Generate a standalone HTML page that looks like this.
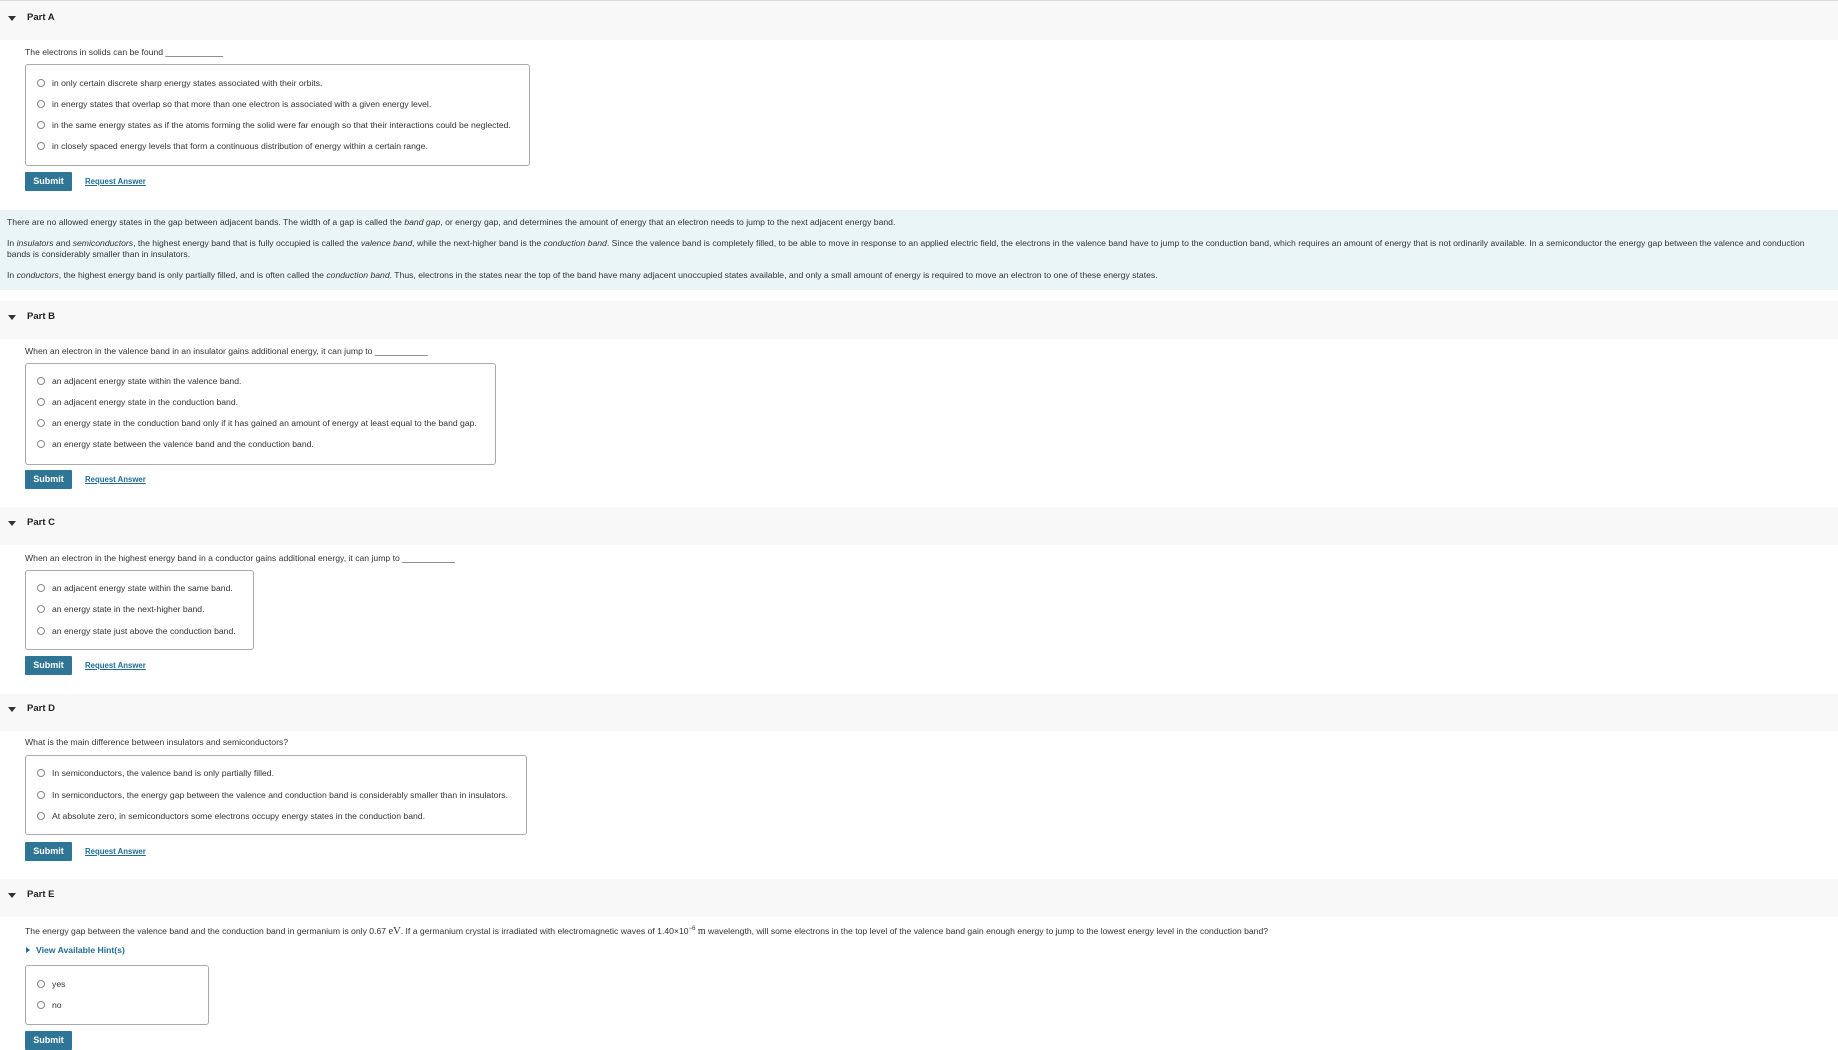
<!DOCTYPE html>
<html><head><meta charset="utf-8"><style>
*{margin:0;padding:0;box-sizing:border-box}
body{width:1838px;height:1040px;overflow:hidden;background:#fff;font-family:"Liberation Sans",Arial,sans-serif;font-size:8.65px;color:#333;position:relative}
.a{position:absolute;white-space:nowrap}
.hdr{position:absolute;left:0;width:1838px;background:#f8f8f8}
.ttl{position:absolute;left:27px;font-weight:bold;font-size:9.5px;color:#222}
.tri{position:absolute;left:8px;width:0;height:0;border-left:4px solid transparent;border-right:4px solid transparent;border-top:5px solid #333}
.box{position:absolute;left:25px;border:1px solid #aaa;border-radius:3px;background:#fff}
.r{position:absolute;left:37px;width:8px;height:8px;border:1px solid #888;border-radius:50%;background:#fff}
.btn{position:absolute;left:25px;width:47px;height:19px;background:#2f7595;color:#fff;font-weight:bold;font-size:9px;text-align:center;line-height:19px;border-radius:1px}
.lnk{position:absolute;left:85px;color:#1f6c93;font-weight:bold;font-size:7.8px;text-decoration:underline}
.info{position:absolute;left:0;top:210px;width:1838px;height:80px;background:#eaf5f7}
i{font-style:italic}
</style></head><body>
<div style="position:absolute;top:0;left:0;width:1838px;height:1px;background:#ddd"></div>

<div class="hdr" style="top:1px;height:39px"></div><div class="tri" style="top:16px"></div><div class="ttl a" style="top:12px">Part A</div>
<div class="a" style="left:25px;top:47px">The electrons in solids can be found ____________</div>
<div class="box" style="top:64px;width:505px;height:102px"></div>
<div class="r" style="top:79px"></div><div class="a" style="left:52px;top:78px">in only certain discrete sharp energy states associated with their orbits.</div>
<div class="r" style="top:100px"></div><div class="a" style="left:52px;top:99px">in energy states that overlap so that more than one electron is associated with a given energy level.</div>
<div class="r" style="top:121px"></div><div class="a" style="left:52px;top:120px">in the same energy states as if the atoms forming the solid were far enough so that their interactions could be neglected.</div>
<div class="r" style="top:142px"></div><div class="a" style="left:52px;top:141px">in closely spaced energy levels that form a continuous distribution of energy within a certain range.</div>
<div class="btn" style="top:172px">Submit</div><div class="lnk a" style="top:177px">Request Answer</div>

<div class="info"></div>
<div class="a" style="left:7px;top:217px">There are no allowed energy states in the gap between adjacent bands. The width of a gap is called the <i>band gap</i>, or energy gap, and determines the amount of energy that an electron needs to jump to the next adjacent energy band.</div>
<div class="a" style="left:7px;top:238px">In <i>insulators</i> and <i>semiconductors</i>, the highest energy band that is fully occupied is called the <i>valence band</i>, while the next-higher band is the <i>conduction band</i>. Since the valence band is completely filled, to be able to move in response to an applied electric field, the electrons in the valence band have to jump to the conduction band, which requires an amount of energy that is not ordinarily available. In a semiconductor the energy gap between the valence and conduction</div>
<div class="a" style="left:7px;top:249px">bands is considerably smaller than in insulators.</div>
<div class="a" style="left:7px;top:270px">In <i>conductors</i>, the highest energy band is only partially filled, and is often called the <i>conduction band</i>. Thus, electrons in the states near the top of the band have many adjacent unoccupied states available, and only a small amount of energy is required to move an electron to one of these energy states.</div>

<div class="hdr" style="top:301px;height:38px"></div><div class="tri" style="top:315px"></div><div class="ttl a" style="top:311px">Part B</div>
<div class="a" style="left:25px;top:346px">When an electron in the valence band in an insulator gains additional energy, it can jump to ___________</div>
<div class="box" style="top:363px;width:471px;height:102px"></div>
<div class="r" style="top:377px"></div><div class="a" style="left:52px;top:376px">an adjacent energy state within the valence band.</div>
<div class="r" style="top:398px"></div><div class="a" style="left:52px;top:397px">an adjacent energy state in the conduction band.</div>
<div class="r" style="top:419px"></div><div class="a" style="left:52px;top:418px">an energy state in the conduction band only if it has gained an amount of energy at least equal to the band gap.</div>
<div class="r" style="top:440px"></div><div class="a" style="left:52px;top:439px">an energy state between the valence band and the conduction band.</div>
<div class="btn" style="top:470px">Submit</div><div class="lnk a" style="top:475px">Request Answer</div>

<div class="hdr" style="top:507px;height:38px"></div><div class="tri" style="top:521px"></div><div class="ttl a" style="top:517px">Part C</div>
<div class="a" style="left:25px;top:553px">When an electron in the highest energy band in a conductor gains additional energy, it can jump to ___________</div>
<div class="box" style="top:570px;width:229px;height:80px"></div>
<div class="r" style="top:584px"></div><div class="a" style="left:52px;top:583px">an adjacent energy state within the same band.</div>
<div class="r" style="top:605px"></div><div class="a" style="left:52px;top:604px">an energy state in the next-higher band.</div>
<div class="r" style="top:627px"></div><div class="a" style="left:52px;top:626px">an energy state just above the conduction band.</div>
<div class="btn" style="top:656px">Submit</div><div class="lnk a" style="top:661px">Request Answer</div>

<div class="hdr" style="top:694px;height:37px"></div><div class="tri" style="top:707px"></div><div class="ttl a" style="top:703px">Part D</div>
<div class="a" style="left:25px;top:737px">What is the main difference between insulators and semiconductors?</div>
<div class="box" style="top:755px;width:502px;height:80px"></div>
<div class="r" style="top:769px"></div><div class="a" style="left:52px;top:768px">In semiconductors, the valence band is only partially filled.</div>
<div class="r" style="top:791px"></div><div class="a" style="left:52px;top:790px">In semiconductors, the energy gap between the valence and conduction band is considerably smaller than in insulators.</div>
<div class="r" style="top:812px"></div><div class="a" style="left:52px;top:811px">At absolute zero, in semiconductors some electrons occupy energy states in the conduction band.</div>
<div class="btn" style="top:842px">Submit</div><div class="lnk a" style="top:847px">Request Answer</div>

<div class="hdr" style="top:879px;height:38px"></div><div class="tri" style="top:893px"></div><div class="ttl a" style="top:889px">Part E</div>
<div class="a" style="left:25px;top:926px">The energy gap between the valence band and the conduction band in germanium is only 0.67 <span style="font-family:'Liberation Serif',serif;font-size:10.5px">eV</span>. If a germanium crystal is irradiated with electromagnetic waves of 1.40×10<sup style="font-size:6px">−6</sup> <span style="font-family:'Liberation Serif',serif;font-size:10px">m</span> wavelength, will some electrons in the top level of the valence band gain enough energy to jump to the lowest energy level in the conduction band?</div>
<div style="position:absolute;left:26px;top:947px;width:0;height:0;border-top:3.5px solid transparent;border-bottom:3.5px solid transparent;border-left:4px solid #1f6c93"></div>
<div class="a" style="left:36px;top:945px;color:#1f6c93;font-weight:bold">View Available Hint(s)</div>
<div class="box" style="top:965px;width:184px;height:60px"></div>
<div class="r" style="top:980px"></div><div class="a" style="left:52px;top:979px">yes</div>
<div class="r" style="top:1001px"></div><div class="a" style="left:52px;top:1000px">no</div>
<div class="btn" style="top:1031px">Submit</div>
</body></html>
